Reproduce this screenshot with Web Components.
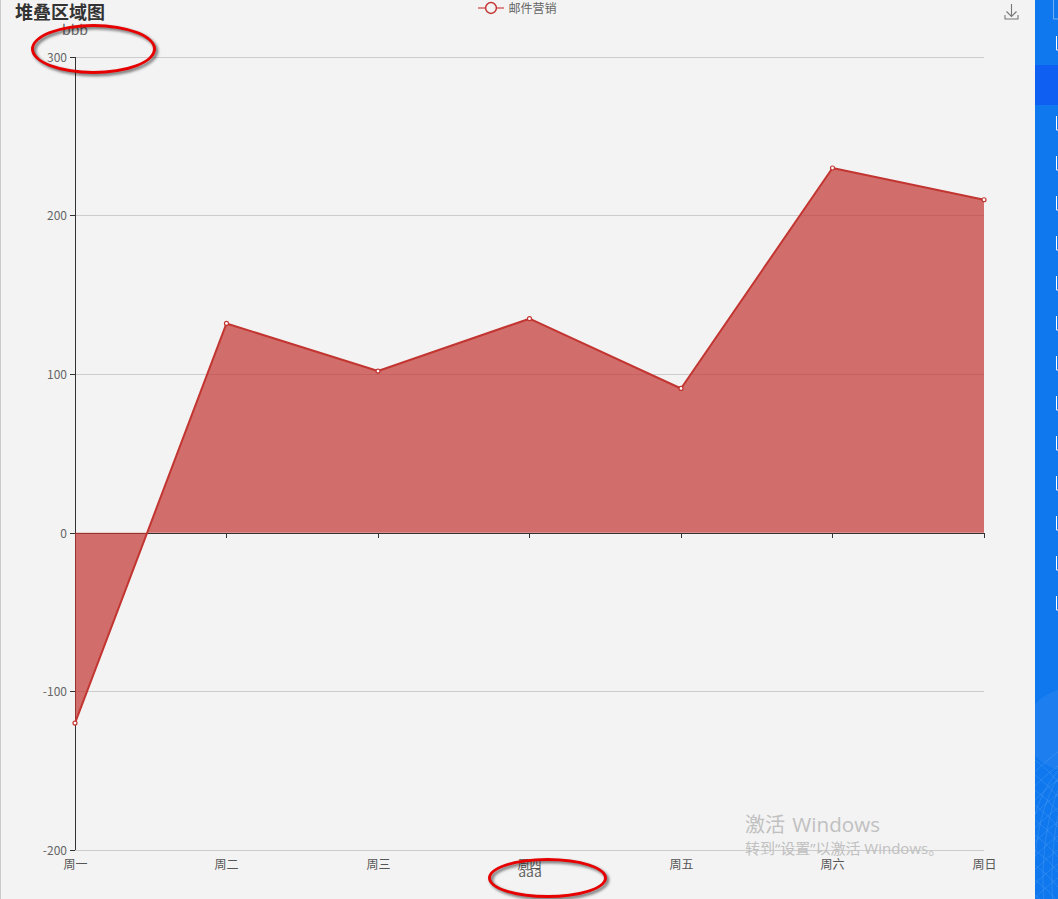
<!DOCTYPE html>
<html lang="zh-CN">
<head>
<meta charset="utf-8">
<title>堆叠区域图</title>
<style>
  html, body { margin: 0; height: 100%; overflow: hidden; }
  body { font-family: "Noto Sans CJK SC", "Noto Sans", sans-serif; }
</style>
</head>
<body>
<app-shell>
  <chart-panel>
    <chart-header slot="header" heading="堆叠区域图">
      <chart-legend label="邮件营销"></chart-legend>
    </chart-header>
    <area-chart slot="chart"></area-chart>
    <note-ring slot="over" style="left:30px;top:24px;width:129px;height:54px"></note-ring>
    <note-ring slot="over" style="left:487px;top:858px;width:123px;height:44px"></note-ring>
    <activation-mark slot="over"></activation-mark>
  </chart-panel>
  <side-rail></side-rail>
</app-shell>

<script>
const appShellTemplate = document.createElement('template');
appShellTemplate.innerHTML = `
    <style>
        :host {
            display: flex;
            width: 100%;
            height: 100vh;
            overflow: hidden;
        }
    </style>
    <slot></slot>
`;

class AppShell extends HTMLElement {
    constructor(){
        super();
        this.attachShadow( { mode:"open" } );
        this.shadowRoot.appendChild( appShellTemplate.content.cloneNode( true ) );
    }
}

const chartPanelTemplate = document.createElement('template');
chartPanelTemplate.innerHTML = `
    <style>
        :host {
            display: grid;
            flex: 1;
            min-width: 0;
            position: relative;
            background-color: #f3f3f3;
            border-left: 1px solid #c9c9c9;
            box-sizing: border-box;
        }
        ::slotted([slot="header"]), ::slotted([slot="chart"]) {
            grid-area: 1 / 1;
        }
        ::slotted([slot="header"]) {
            z-index: 1;
            align-self: start;
        }
    </style>
    <slot name="chart"></slot>
    <slot name="header"></slot>
    <slot name="over"></slot>
`;

class ChartPanel extends HTMLElement {
    constructor(){
        super();
        this.attachShadow( { mode:"open" } );
        this.shadowRoot.appendChild( chartPanelTemplate.content.cloneNode( true ) );
    }
}

const chartHeaderTemplate = document.createElement('template');
chartHeaderTemplate.innerHTML = `
    <style>
        :host {
            display: grid;
            grid-template-columns: 1fr auto 1fr;
            align-items: start;
            padding: 0 14px;
        }
        .title {
            font-weight: 700;
            font-size: 18px;
            line-height: 23px;
            color: #333;
        }
        .save {
            justify-self: end;
            margin-top: 3px;
            margin-right: 1px;
            width: 17px;
            height: 17px;
        }
        .middle { margin-left: -1px; }
    </style>
    <div class="title"></div>
    <div class="middle"><slot></slot></div>
    <svg class="save" viewBox="0 0 17 17" fill="none" stroke="#777" stroke-width="1.1">
        <path d="M8.5 1v12.5M3.5 8.5l5 5 5-5M2 12v4h13v-4"/>
    </svg>
`;

class ChartHeader extends HTMLElement {
    constructor(){
        super();
        this.attachShadow( { mode:"open" } );
        this.shadowRoot.appendChild( chartHeaderTemplate.content.cloneNode( true ) );
        this.shadowRoot.querySelector( '.title' ).textContent = this.getAttribute( 'heading' );
    }
}

const chartLegendTemplate = document.createElement('template');
chartLegendTemplate.innerHTML = `
    <style>
        :host {
            display: flex;
            align-items: center;
            gap: 4px;
            height: 16px;
            font-size: 12px;
            color: #666;
        }
        svg { width: 26px; height: 14px; }
        .label { line-height: 14px; margin-top: -1px; }
    </style>
    <svg viewBox="0 0 26 14">
        <path d="M0 7h26" stroke="#d0504c" stroke-width="1.3"/>
        <circle cx="13" cy="7" r="5.4" fill="#f3f3f3" stroke="#c23531" stroke-width="1.5"/>
    </svg>
    <span class="label"></span>
`;

class ChartLegend extends HTMLElement {
    constructor(){
        super();
        this.attachShadow( { mode:"open" } );
        this.shadowRoot.appendChild( chartLegendTemplate.content.cloneNode( true ) );
        this.shadowRoot.querySelector( '.label' ).textContent = this.getAttribute( 'label' );
    }
}

// chart canvas, coordinates are the pixel grid of the plot
const chartData = [
    { day: '周一', value: -120 },
    { day: '周二', value: 132 },
    { day: '周三', value: 102 },
    { day: '周四', value: 135 },
    { day: '周五', value: 91 },
    { day: '周六', value: 230 },
    { day: '周日', value: 210 }
];

class AreaChart extends HTMLElement {
    constructor(){
        super();
        this.attachShadow( { mode:"open" } );

        const left = 74, right = 983, top = 57, bottom = 850;
        const x = i => left + ( right - left ) * i / 6;
        const y = v => top + ( 300 - v ) * ( bottom - top ) / 500;

        let grid = '', yLabels = '', xLabels = '';
        for ( let v = -200; v <= 300; v += 100 ) {
            const py = Math.round( y( v ) - 0.2 ) + 0.5;
            if ( v !== 0 ) grid += `<path d="M${ left } ${ py }H${ right }" stroke="#ccc"/>`;
            grid += `<path d="M${ left - 5 } ${ py }H${ left }" stroke="#333"/>`;
            yLabels += `<text class="val" x="${ left - 8 }" y="${ py + 4 }" text-anchor="end">${ v }</text>`;
        }
        chartData.forEach( ( d, i ) => {
            const px = Math.floor( x( i ) ) + 0.5;
            grid += `<path d="M${ px } 533v5" stroke="#333"/>`;
            xLabels += `<text x="${ px }" y="869" text-anchor="middle">${ d.day }</text>`;
        } );

        const line = chartData.map( ( d, i ) => `${ x( i ) },${ y( d.value ) }` ).join( ' ' );
        const area = `${ x( 0 ) },${ y( 0 ) } ${ line } ${ x( 6 ) },${ y( 0 ) }`;
        const dots = chartData.map( ( d, i ) =>
            `<circle cx="${ x( i ) }" cy="${ y( d.value ) }" r="2" fill="#fff" stroke="#c23531" stroke-width="1.2"/>` ).join( '' );

        this.shadowRoot.innerHTML = `
            <style>
                :host { display: block; }
                svg { display: block; width: 100%; height: 100%; }
                text { font-size: 12px; fill: #555; }
                .val { fill: #666; }
                .name { font-size: 14px; fill: #666; }
            </style>
            <svg>
                ${ grid }
                <path d="M${ left + 0.5 } ${ top }V${ bottom }" stroke="#333"/>
                <path d="M${ left } 533.5H${ right }" stroke="#333"/>
                <polygon points="${ area }" fill="#c23531" fill-opacity="0.7"/>
                <polyline points="${ line }" fill="none" stroke="#c23531" stroke-width="2" stroke-linejoin="round"/>
                ${ dots }
                ${ yLabels }
                ${ xLabels }
                <text class="name" x="74" y="35" text-anchor="middle">bbb</text>
                <text class="name" x="529" y="877" text-anchor="middle">aaa</text>
            </svg>
        `;
    }
}

const noteRingTemplate = document.createElement('template');
noteRingTemplate.innerHTML = `
    <style>
        :host {
            display: block;
            position: absolute;
            pointer-events: none;
        }
        .ring {
            box-sizing: border-box;
            width: calc( 100% - 4px );
            height: calc( 100% - 4px );
            border: 3.5px solid #e60000;
            border-radius: 50%;
            filter: drop-shadow( 2px 2px 1.5px rgba( 0, 0, 0, 0.6 ) );
        }
    </style>
    <div class="ring"></div>
`;

class NoteRing extends HTMLElement {
    constructor(){
        super();
        this.attachShadow( { mode:"open" } );
        this.shadowRoot.appendChild( noteRingTemplate.content.cloneNode( true ) );
    }
}

const activationMarkTemplate = document.createElement('template');
activationMarkTemplate.innerHTML = `
    <style>
        :host {
            position: absolute;
            left: 744px;
            top: 811px;
            display: flex;
            flex-direction: column;
            color: #c0c0c0;
            pointer-events: none;
            font-family: "Open Sans", "Noto Sans CJK SC", sans-serif;
        }
        .big { font-size: 20px; line-height: 27px; white-space: nowrap; }
        .big span { font-size: 20.6px; margin-left: 2px; }
        .small { font-size: 15px; line-height: 20px; white-space: nowrap; }
    </style>
    <div class="big">激活<span> Windows</span></div>
    <div class="small">转到“设置”以激活 Windows。</div>
`;

class ActivationMark extends HTMLElement {
    constructor(){
        super();
        this.attachShadow( { mode:"open" } );
        this.shadowRoot.appendChild( activationMarkTemplate.content.cloneNode( true ) );
    }
}

class SideRail extends HTMLElement {
    constructor(){
        super();
        this.attachShadow( { mode:"open" } );

        // only the left edge of each menu icon is inside the window
        let marks = '';
        for ( let y = 36; y <= 596; y += 40 ) {
            if ( y === 76 ) continue;
            marks += `<path d="M21.5 ${ y }v14h2" fill="none" stroke="#fff" stroke-width="1"/>`;
        }

        let net = '';
        for ( let i = 0; i < 7; i++ ) {
            net += `<ellipse cx="62" cy="880" rx="${ 18 + i * 9 }" ry="130" />`;
        }
        for ( let i = 0; i < 10; i++ ) {
            net += `<path d="M0 ${ 772 + i * 14 }Q14 ${ 758 + i * 14 } 23 ${ 752 + i * 14 }"/>`;
            net += `<path d="M0 ${ 760 + i * 15 }Q14 ${ 770 + i * 15 } 23 ${ 782 + i * 15 }"/>`;
        }

        this.shadowRoot.innerHTML = `
            <style>
                :host {
                    display: block;
                    flex: 0 0 23px;
                    background-color: #0f78ee;
                    overflow: hidden;
                }
                svg { display: block; width: 23px; height: 899px; }
            </style>
            <svg viewBox="0 0 23 899">
                <rect y="65" width="23" height="40" fill="#0f5ff2"/>
                <path d="M18.5 0v19H23" fill="none" stroke="#6fb0f5" stroke-width="1"/>
                <ellipse cx="38" cy="730" rx="48" ry="42" fill="#fff" fill-opacity="0.06"/>
                <g fill="none" stroke="#fff" stroke-opacity="0.1" stroke-width="1">${ net }</g>
                ${ marks }
            </svg>
        `;
    }
}

window.customElements.define( 'app-shell', AppShell );
window.customElements.define( 'chart-panel', ChartPanel );
window.customElements.define( 'chart-header', ChartHeader );
window.customElements.define( 'chart-legend', ChartLegend );
window.customElements.define( 'area-chart', AreaChart );
window.customElements.define( 'note-ring', NoteRing );
window.customElements.define( 'activation-mark', ActivationMark );
window.customElements.define( 'side-rail', SideRail );
</script>
</body>
</html>
